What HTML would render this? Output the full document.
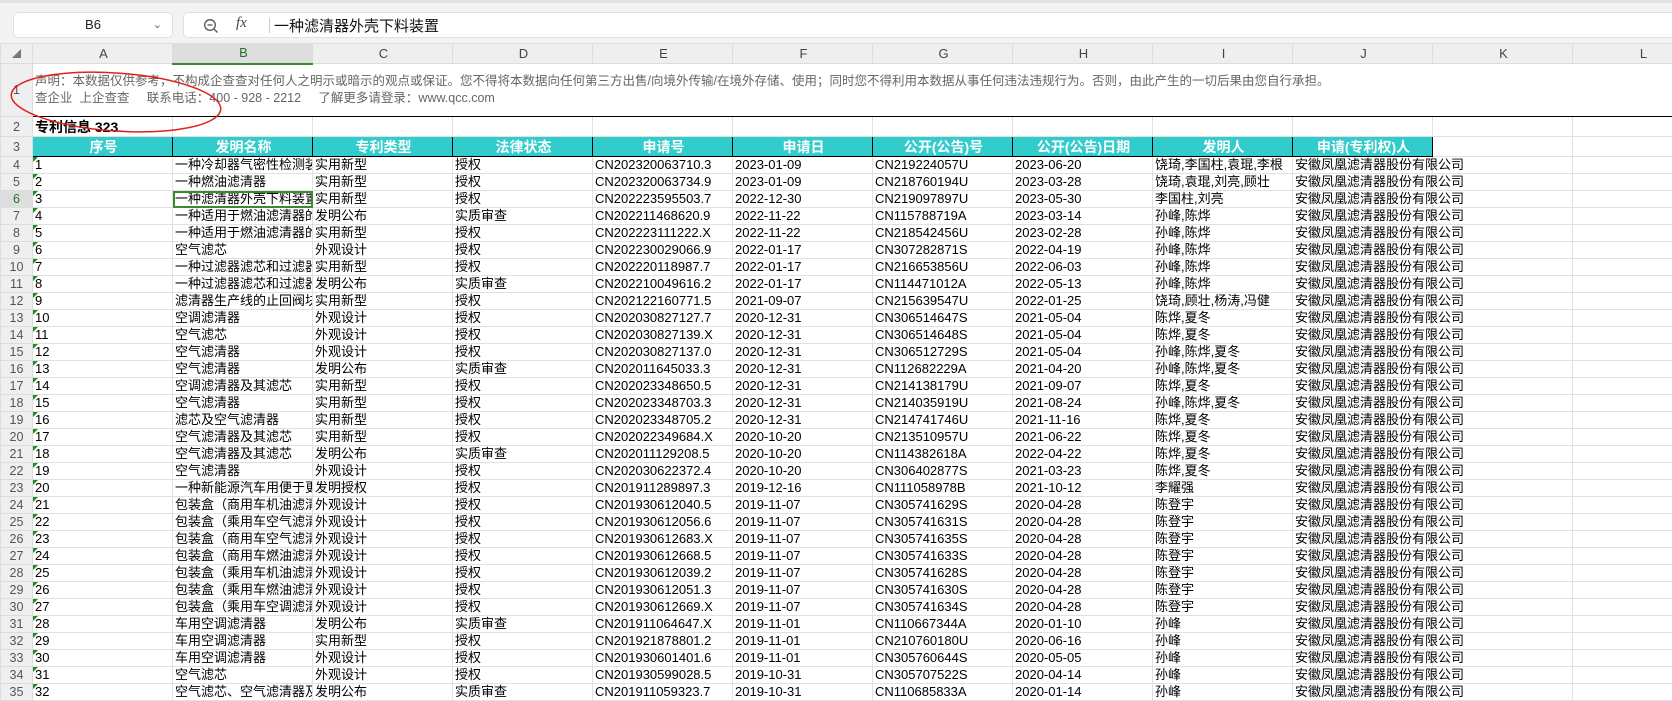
<!DOCTYPE html>
<html><head><meta charset="utf-8"><style>
*{margin:0;padding:0;box-sizing:border-box}
body{width:1672px;height:694px;overflow:hidden;background:#fff;font-family:"Liberation Sans","Noto Sans CJK SC",sans-serif;position:relative}
#top{position:absolute;left:0;top:0;width:1672px;height:43px;background:#f3f3f3;border-top:3px solid #e2e2e2}
#nb{position:absolute;left:13px;top:9px;width:160px;height:26px;background:#fff;border:1px solid #e0e0e0;border-radius:5px;font-size:13px;color:#222;text-align:center;line-height:24px}
#nb span{position:absolute;right:10px;top:0;color:#666;font-size:11px}
#fb{position:absolute;left:183px;top:9px;width:1500px;height:26px;background:#fff;border:1px solid #e0e0e0;border-radius:5px}
#fb .fx{position:absolute;left:52px;top:2px;font-family:"Liberation Serif",serif;font-style:italic;font-size:15px;color:#444}
#fb .sep{position:absolute;left:85px;top:5px;width:1px;height:15px;background:#ccc}
#fb .t{position:absolute;left:90px;top:2px;font-size:15px;color:#111}
table{position:absolute;left:0;top:43px;width:1712px;border-collapse:collapse;table-layout:fixed;font-size:13px}
td{height:17px;padding:0 0 0 2px;white-space:nowrap;overflow:hidden;border:1px solid #e1e1e1;line-height:16px;color:#000;vertical-align:middle}
td.rh{background:#efefef;color:#555;text-align:center;padding:0;font-size:12.5px;border-color:#dcdcdc}
tr.ch td{height:20px;background:#efefef;color:#444;text-align:center;font-size:13px;border-color:#dcdcdc}
tr.ch td.sel{background:#dedede;color:#2a6e2a;border-bottom:2px solid #3c8a2e}
td.a{position:relative}
td.a:before{content:"";position:absolute;left:0;top:0;border-top:5px solid #1f8a2c;border-right:5px solid transparent}
td.j{overflow:visible}
tr.r1 td{height:53px;border-bottom:1px solid #000;color:#666;font-size:12.5px;vertical-align:top;padding-top:8px;line-height:17px}
tr.r1 td.rh{color:#555;vertical-align:middle;padding-top:0;border-bottom-color:#dcdcdc}
tr.r2 td{height:20px}
tr.r3 td{height:20px}
tr.r3 td.h{background:#33cccc;color:#fff;font-weight:bold;text-align:center;border:1px solid #000;font-size:14px}
td.rsel{background:#dedede!important;color:#2a6e2a!important}
td.bs{outline:2px solid #3c8a2e;outline-offset:-2px}
</style></head><body>
<div id="top">
<div id="nb">B6<span>&#8964;</span></div>
<div id="fb">
<svg style="position:absolute;left:19px;top:5px" width="16" height="16" viewBox="0 0 16 16"><circle cx="7" cy="7" r="5.3" fill="none" stroke="#555" stroke-width="1.3"/><line x1="11" y1="11" x2="14.5" y2="14.5" stroke="#555" stroke-width="1.3"/><line x1="4.5" y1="7" x2="9.5" y2="7" stroke="#555" stroke-width="1.3"/></svg>
<span class="fx">fx</span><span class="sep"></span><span class="t">一种滤清器外壳下料装置</span></div>
</div>
<table>
<colgroup><col style="width:32px"><col style="width:140px"><col style="width:140px"><col style="width:140px"><col style="width:140px"><col style="width:140px"><col style="width:140px"><col style="width:140px"><col style="width:140px"><col style="width:140px"><col style="width:140px"><col style="width:140px"><col style="width:140px"></colgroup>
<tr class="ch"><td class="rh" style="font-size:9px;color:#777">◢</td><td>A</td><td class="sel">B</td><td>C</td><td>D</td><td>E</td><td>F</td><td>G</td><td>H</td><td>I</td><td>J</td><td>K</td><td>L</td></tr>
<tr class="r1"><td class="rh">1</td><td colspan="12" style="overflow:visible">声明：本数据仅供参考，不构成企查查对任何人之明示或暗示的观点或保证。您不得将本数据向任何第三方出售/向境外传输/在境外存储、使用；同时您不得利用本数据从事任何违法违规行为。否则，由此产生的一切后果由您自行承担。<br>查企业&nbsp; 上企查查&nbsp;&nbsp;&nbsp;&nbsp; 联系电话：400 - 928 - 2212&nbsp;&nbsp;&nbsp;&nbsp; 了解更多请登录：www.qcc.com</td></tr>
<tr class="r2"><td class="rh">2</td><td style="font-weight:bold;font-size:14px;overflow:visible">专利信息 323</td><td></td><td></td><td></td><td></td><td></td><td></td><td></td><td></td><td></td><td></td><td></td></tr>
<tr class="r3"><td class="rh">3</td><td class="h">序号</td><td class="h">发明名称</td><td class="h">专利类型</td><td class="h">法律状态</td><td class="h">申请号</td><td class="h">申请日</td><td class="h">公开(公告)号</td><td class="h">公开(公告)日期</td><td class="h">发明人</td><td class="h">申请(专利权)人</td><td></td><td></td></tr>
<tr><td class="rh">4</td><td class="a">1</td><td>一种冷却器气密性检测装置</td><td>实用新型</td><td>授权</td><td>CN202320063710.3</td><td>2023-01-09</td><td>CN219224057U</td><td>2023-06-20</td><td>饶琦,李国柱,袁琨,李根</td><td class="j">安徽凤凰滤清器股份有限公司</td><td></td><td></td></tr>
<tr><td class="rh">5</td><td class="a">2</td><td>一种燃油滤清器</td><td>实用新型</td><td>授权</td><td>CN202320063734.9</td><td>2023-01-09</td><td>CN218760194U</td><td>2023-03-28</td><td>饶琦,袁琨,刘亮,顾壮</td><td class="j">安徽凤凰滤清器股份有限公司</td><td></td><td></td></tr>
<tr><td class="rh rsel">6</td><td class="a">3</td><td class="bs">一种滤清器外壳下料装置</td><td>实用新型</td><td>授权</td><td>CN202223595503.7</td><td>2022-12-30</td><td>CN219097897U</td><td>2023-05-30</td><td>李国柱,刘亮</td><td class="j">安徽凤凰滤清器股份有限公司</td><td></td><td></td></tr>
<tr><td class="rh">7</td><td class="a">4</td><td>一种适用于燃油滤清器的装置</td><td>发明公布</td><td>实质审查</td><td>CN202211468620.9</td><td>2022-11-22</td><td>CN115788719A</td><td>2023-03-14</td><td>孙峰,陈烨</td><td class="j">安徽凤凰滤清器股份有限公司</td><td></td><td></td></tr>
<tr><td class="rh">8</td><td class="a">5</td><td>一种适用于燃油滤清器的装置</td><td>实用新型</td><td>授权</td><td>CN202223111222.X</td><td>2022-11-22</td><td>CN218542456U</td><td>2023-02-28</td><td>孙峰,陈烨</td><td class="j">安徽凤凰滤清器股份有限公司</td><td></td><td></td></tr>
<tr><td class="rh">9</td><td class="a">6</td><td>空气滤芯</td><td>外观设计</td><td>授权</td><td>CN202230029066.9</td><td>2022-01-17</td><td>CN307282871S</td><td>2022-04-19</td><td>孙峰,陈烨</td><td class="j">安徽凤凰滤清器股份有限公司</td><td></td><td></td></tr>
<tr><td class="rh">10</td><td class="a">7</td><td>一种过滤器滤芯和过滤器组件</td><td>实用新型</td><td>授权</td><td>CN202220118987.7</td><td>2022-01-17</td><td>CN216653856U</td><td>2022-06-03</td><td>孙峰,陈烨</td><td class="j">安徽凤凰滤清器股份有限公司</td><td></td><td></td></tr>
<tr><td class="rh">11</td><td class="a">8</td><td>一种过滤器滤芯和过滤器组件</td><td>发明公布</td><td>实质审查</td><td>CN202210049616.2</td><td>2022-01-17</td><td>CN114471012A</td><td>2022-05-13</td><td>孙峰,陈烨</td><td class="j">安徽凤凰滤清器股份有限公司</td><td></td><td></td></tr>
<tr><td class="rh">12</td><td class="a">9</td><td>滤清器生产线的止回阀块装置</td><td>实用新型</td><td>授权</td><td>CN202122160771.5</td><td>2021-09-07</td><td>CN215639547U</td><td>2022-01-25</td><td>饶琦,顾壮,杨涛,冯健</td><td class="j">安徽凤凰滤清器股份有限公司</td><td></td><td></td></tr>
<tr><td class="rh">13</td><td class="a">10</td><td>空调滤清器</td><td>外观设计</td><td>授权</td><td>CN202030827127.7</td><td>2020-12-31</td><td>CN306514647S</td><td>2021-05-04</td><td>陈烨,夏冬</td><td class="j">安徽凤凰滤清器股份有限公司</td><td></td><td></td></tr>
<tr><td class="rh">14</td><td class="a">11</td><td>空气滤芯</td><td>外观设计</td><td>授权</td><td>CN202030827139.X</td><td>2020-12-31</td><td>CN306514648S</td><td>2021-05-04</td><td>陈烨,夏冬</td><td class="j">安徽凤凰滤清器股份有限公司</td><td></td><td></td></tr>
<tr><td class="rh">15</td><td class="a">12</td><td>空气滤清器</td><td>外观设计</td><td>授权</td><td>CN202030827137.0</td><td>2020-12-31</td><td>CN306512729S</td><td>2021-05-04</td><td>孙峰,陈烨,夏冬</td><td class="j">安徽凤凰滤清器股份有限公司</td><td></td><td></td></tr>
<tr><td class="rh">16</td><td class="a">13</td><td>空气滤清器</td><td>发明公布</td><td>实质审查</td><td>CN202011645033.3</td><td>2020-12-31</td><td>CN112682229A</td><td>2021-04-20</td><td>孙峰,陈烨,夏冬</td><td class="j">安徽凤凰滤清器股份有限公司</td><td></td><td></td></tr>
<tr><td class="rh">17</td><td class="a">14</td><td>空调滤清器及其滤芯</td><td>实用新型</td><td>授权</td><td>CN202023348650.5</td><td>2020-12-31</td><td>CN214138179U</td><td>2021-09-07</td><td>陈烨,夏冬</td><td class="j">安徽凤凰滤清器股份有限公司</td><td></td><td></td></tr>
<tr><td class="rh">18</td><td class="a">15</td><td>空气滤清器</td><td>实用新型</td><td>授权</td><td>CN202023348703.3</td><td>2020-12-31</td><td>CN214035919U</td><td>2021-08-24</td><td>孙峰,陈烨,夏冬</td><td class="j">安徽凤凰滤清器股份有限公司</td><td></td><td></td></tr>
<tr><td class="rh">19</td><td class="a">16</td><td>滤芯及空气滤清器</td><td>实用新型</td><td>授权</td><td>CN202023348705.2</td><td>2020-12-31</td><td>CN214741746U</td><td>2021-11-16</td><td>陈烨,夏冬</td><td class="j">安徽凤凰滤清器股份有限公司</td><td></td><td></td></tr>
<tr><td class="rh">20</td><td class="a">17</td><td>空气滤清器及其滤芯</td><td>实用新型</td><td>授权</td><td>CN202022349684.X</td><td>2020-10-20</td><td>CN213510957U</td><td>2021-06-22</td><td>陈烨,夏冬</td><td class="j">安徽凤凰滤清器股份有限公司</td><td></td><td></td></tr>
<tr><td class="rh">21</td><td class="a">18</td><td>空气滤清器及其滤芯</td><td>发明公布</td><td>实质审查</td><td>CN202011129208.5</td><td>2020-10-20</td><td>CN114382618A</td><td>2022-04-22</td><td>陈烨,夏冬</td><td class="j">安徽凤凰滤清器股份有限公司</td><td></td><td></td></tr>
<tr><td class="rh">22</td><td class="a">19</td><td>空气滤清器</td><td>外观设计</td><td>授权</td><td>CN202030622372.4</td><td>2020-10-20</td><td>CN306402877S</td><td>2021-03-23</td><td>陈烨,夏冬</td><td class="j">安徽凤凰滤清器股份有限公司</td><td></td><td></td></tr>
<tr><td class="rh">23</td><td class="a">20</td><td>一种新能源汽车用便于更换的</td><td>发明授权</td><td>授权</td><td>CN201911289897.3</td><td>2019-12-16</td><td>CN111058978B</td><td>2021-10-12</td><td>李耀强</td><td class="j">安徽凤凰滤清器股份有限公司</td><td></td><td></td></tr>
<tr><td class="rh">24</td><td class="a">21</td><td>包装盒（商用车机油滤清器）</td><td>外观设计</td><td>授权</td><td>CN201930612040.5</td><td>2019-11-07</td><td>CN305741629S</td><td>2020-04-28</td><td>陈登宇</td><td class="j">安徽凤凰滤清器股份有限公司</td><td></td><td></td></tr>
<tr><td class="rh">25</td><td class="a">22</td><td>包装盒（乘用车空气滤清器）</td><td>外观设计</td><td>授权</td><td>CN201930612056.6</td><td>2019-11-07</td><td>CN305741631S</td><td>2020-04-28</td><td>陈登宇</td><td class="j">安徽凤凰滤清器股份有限公司</td><td></td><td></td></tr>
<tr><td class="rh">26</td><td class="a">23</td><td>包装盒（商用车空气滤清器）</td><td>外观设计</td><td>授权</td><td>CN201930612683.X</td><td>2019-11-07</td><td>CN305741635S</td><td>2020-04-28</td><td>陈登宇</td><td class="j">安徽凤凰滤清器股份有限公司</td><td></td><td></td></tr>
<tr><td class="rh">27</td><td class="a">24</td><td>包装盒（商用车燃油滤清器）</td><td>外观设计</td><td>授权</td><td>CN201930612668.5</td><td>2019-11-07</td><td>CN305741633S</td><td>2020-04-28</td><td>陈登宇</td><td class="j">安徽凤凰滤清器股份有限公司</td><td></td><td></td></tr>
<tr><td class="rh">28</td><td class="a">25</td><td>包装盒（乘用车机油滤清器）</td><td>外观设计</td><td>授权</td><td>CN201930612039.2</td><td>2019-11-07</td><td>CN305741628S</td><td>2020-04-28</td><td>陈登宇</td><td class="j">安徽凤凰滤清器股份有限公司</td><td></td><td></td></tr>
<tr><td class="rh">29</td><td class="a">26</td><td>包装盒（乘用车燃油滤清器）</td><td>外观设计</td><td>授权</td><td>CN201930612051.3</td><td>2019-11-07</td><td>CN305741630S</td><td>2020-04-28</td><td>陈登宇</td><td class="j">安徽凤凰滤清器股份有限公司</td><td></td><td></td></tr>
<tr><td class="rh">30</td><td class="a">27</td><td>包装盒（乘用车空调滤清器）</td><td>外观设计</td><td>授权</td><td>CN201930612669.X</td><td>2019-11-07</td><td>CN305741634S</td><td>2020-04-28</td><td>陈登宇</td><td class="j">安徽凤凰滤清器股份有限公司</td><td></td><td></td></tr>
<tr><td class="rh">31</td><td class="a">28</td><td>车用空调滤清器</td><td>发明公布</td><td>实质审查</td><td>CN201911064647.X</td><td>2019-11-01</td><td>CN110667344A</td><td>2020-01-10</td><td>孙峰</td><td class="j">安徽凤凰滤清器股份有限公司</td><td></td><td></td></tr>
<tr><td class="rh">32</td><td class="a">29</td><td>车用空调滤清器</td><td>实用新型</td><td>授权</td><td>CN201921878801.2</td><td>2019-11-01</td><td>CN210760180U</td><td>2020-06-16</td><td>孙峰</td><td class="j">安徽凤凰滤清器股份有限公司</td><td></td><td></td></tr>
<tr><td class="rh">33</td><td class="a">30</td><td>车用空调滤清器</td><td>外观设计</td><td>授权</td><td>CN201930601401.6</td><td>2019-11-01</td><td>CN305760644S</td><td>2020-05-05</td><td>孙峰</td><td class="j">安徽凤凰滤清器股份有限公司</td><td></td><td></td></tr>
<tr><td class="rh">34</td><td class="a">31</td><td>空气滤芯</td><td>外观设计</td><td>授权</td><td>CN201930599028.5</td><td>2019-10-31</td><td>CN305707522S</td><td>2020-04-14</td><td>孙峰</td><td class="j">安徽凤凰滤清器股份有限公司</td><td></td><td></td></tr>
<tr><td class="rh">35</td><td class="a">32</td><td>空气滤芯、空气滤清器及</td><td>发明公布</td><td>实质审查</td><td>CN201911059323.7</td><td>2019-10-31</td><td>CN110685833A</td><td>2020-01-14</td><td>孙峰</td><td class="j">安徽凤凰滤清器股份有限公司</td><td></td><td></td></tr>
</table>
<svg style="position:absolute;left:0;top:0" width="300" height="160"><ellipse cx="116" cy="102" rx="105" ry="29" fill="none" stroke="#e02020" stroke-width="1.5" transform="rotate(4 116 102)"/></svg>
</body></html>
